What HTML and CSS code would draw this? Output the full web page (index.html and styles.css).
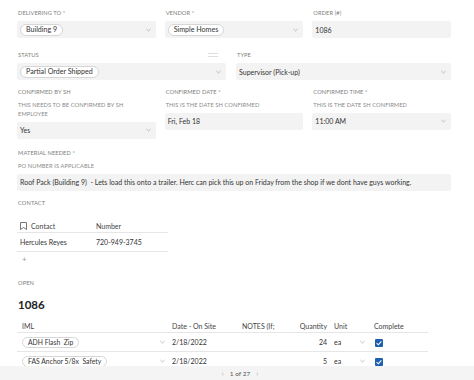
FILE: index.html
```html
<!DOCTYPE html>
<html>
<head>
<meta charset="utf-8">
<link rel="stylesheet" href="styles.css">
</head>
<body>
<div class="page">
  <div class="row row-3">
    <div class="field">
      <div class="label">Delivering to *</div>
      <div class="box"><span class="pill">Building 9</span><svg class="chev" viewBox="0 0 6 4"><polyline points="0.5,0.8 3,3.2 5.5,0.8"/></svg></div>
    </div>
    <div class="field">
      <div class="label">Vendor *</div>
      <div class="box"><span class="pill">Simple Homes</span><svg class="chev" viewBox="0 0 6 4"><polyline points="0.5,0.8 3,3.2 5.5,0.8"/></svg></div>
    </div>
    <div class="field">
      <div class="label">Order (#)</div>
      <div class="box"><span class="val">1086</span></div>
    </div>
  </div>

  <div class="row row-2 gap-r2">
    <div class="field">
      <div class="label label-flex"><span>Status</span><svg class="handle" viewBox="0 0 10 4"><line x1="0" y1="0.5" x2="10" y2="0.5"/><line x1="0" y1="3.5" x2="10" y2="3.5"/></svg></div>
      <div class="box"><span class="pill">Partial Order Shipped</span><svg class="chev" viewBox="0 0 6 4"><polyline points="0.5,0.8 3,3.2 5.5,0.8"/></svg></div>
    </div>
    <div class="field">
      <div class="label">Type</div>
      <div class="box"><span class="val">Supervisor (Pick-up)</span><svg class="chev" viewBox="0 0 6 4"><polyline points="0.5,0.8 3,3.2 5.5,0.8"/></svg></div>
    </div>
  </div>

  <div class="row row-3 gap-r3">
    <div class="field">
      <div class="label">Confirmed by SH</div>
      <div class="desc">This needs to be confirmed by SH employee</div>
      <div class="box"><span class="val">Yes</span><svg class="chev" viewBox="0 0 6 4"><polyline points="0.5,0.8 3,3.2 5.5,0.8"/></svg></div>
    </div>
    <div class="field">
      <div class="label">Confirmed date *</div>
      <div class="desc">This is the date SH confirmed</div>
      <div class="box"><span class="val">Fri, Feb 18</span></div>
    </div>
    <div class="field">
      <div class="label">Confirmed time *</div>
      <div class="desc">This is the date SH confirmed</div>
      <div class="box"><span class="val">11:00 AM</span><svg class="chev" viewBox="0 0 6 4"><polyline points="0.5,0.8 3,3.2 5.5,0.8"/></svg></div>
    </div>
  </div>

  <div class="field gap-r4">
    <div class="label">Material needed *</div>
    <div class="desc">PO number is applicable</div>
    <div class="box"><span class="val">Roof Pack (Building 9)&nbsp; - Lets load this onto a trailer. Herc can pick this up on Friday from the shop if we dont have guys working.</span></div>
  </div>

  <div class="label gap-contact">Contact</div>
  <div class="ctable">
    <div class="crow chead">
      <div class="ccell"><svg class="bookmark" viewBox="0 0 7 8"><path d="M0.5,0.5 H6.5 V7.5 L3.5,5.5 L0.5,7.5 Z"/></svg>Contact</div>
      <div class="ccell">Number</div>
    </div>
    <div class="crow cbody">
      <div class="ccell">Hercules Reyes</div>
      <div class="ccell">720-949-3745</div>
    </div>
  </div>
  <div class="plus">+</div>

  <div class="label gap-open">Open</div>
  <div class="heading">1086</div>

  <div class="itable">
    <div class="irow ihead">
      <div class="icell c-iml">IML</div>
      <div class="icell c-date">Date - On Site</div>
      <div class="icell c-notes">NOTES (If;</div>
      <div class="icell c-qty">Quantity</div>
      <div class="icell c-unit">Unit</div>
      <div class="icell c-comp">Complete</div>
    </div>
    <div class="irow ibody">
      <div class="icell c-iml"><span class="pill pill-sm">ADH Flash&nbsp; Zip</span><svg class="chev" viewBox="0 0 6 4"><polyline points="0.5,0.8 3,3.2 5.5,0.8"/></svg></div>
      <div class="icell c-date">2/18/2022</div>
      <div class="icell c-notes"></div>
      <div class="icell c-qty">24</div>
      <div class="icell c-unit"><span>ea</span><svg class="chev" viewBox="0 0 6 4"><polyline points="0.5,0.8 3,3.2 5.5,0.8"/></svg></div>
      <div class="icell c-comp"><span class="check"><svg viewBox="0 0 8 8"><polyline points="1.6,4.2 3.3,5.8 6.4,2.3"/></svg></span></div>
    </div>
    <div class="irow ibody">
      <div class="icell c-iml"><span class="pill pill-sm">FAS Anchor 5/8x&nbsp; Safety</span><svg class="chev" viewBox="0 0 6 4"><polyline points="0.5,0.8 3,3.2 5.5,0.8"/></svg></div>
      <div class="icell c-date">2/18/2022</div>
      <div class="icell c-notes"></div>
      <div class="icell c-qty">5</div>
      <div class="icell c-unit"><span>ea</span><svg class="chev" viewBox="0 0 6 4"><polyline points="0.5,0.8 3,3.2 5.5,0.8"/></svg></div>
      <div class="icell c-comp"><span class="check"><svg viewBox="0 0 8 8"><polyline points="1.6,4.2 3.3,5.8 6.4,2.3"/></svg></span></div>
    </div>
  </div>
</div>

<div class="pager"><span class="pg-arrow">‹</span><span>1 of 27</span><span class="pg-arrow">›</span></div>
</body>
</html>
```

FILE: styles.css
```css
html, body {
  margin: 0;
  padding: 0;
  overflow: hidden;
  background: #ffffff;
}

body {
  font-family: "Lato", "Open Sans", sans-serif;
  color: #333333;
  width: 474px;
  height: 380px;
}

.page {
  padding: 9px 23px 0 17px;
  width: 434px;
}

.row {
  display: grid;
  column-gap: 9px;
}

.row-3 {
  grid-template-columns: repeat(3, 1fr);
}

.row-2 {
  grid-template-columns: 209px 215px;
  column-gap: 10px;
}

.gap-r2 { margin-top: 13px; }
.gap-r3 { margin-top: 8px; }
.gap-r4 { margin-top: 10.5px; }
.gap-contact { margin-top: 8.5px; }
.gap-open { margin-top: 13px; }

.field {
  display: flex;
  flex-direction: column;
}

.label {
  font-size: 5.7px;
  line-height: 8px;
  text-transform: uppercase;
  color: #7d7d7d;
  padding-left: 1px;
  letter-spacing: 0.1px;
}

.label-flex {
  display: flex;
  justify-content: space-between;
  align-items: center;
}

.handle {
  width: 10px;
  height: 4px;
  margin-right: 8px;
  stroke: #dedede;
  stroke-width: 1;
}

.desc {
  font-size: 5.7px;
  line-height: 9px;
  text-transform: uppercase;
  color: #8a8a8a;
  margin-top: 3.5px;
  padding-left: 1px;
  padding-right: 20px;
  letter-spacing: 0.1px;
}

.box {
  margin-top: 4px;
  height: 17px;
  background: #f3f3f3;
  border-radius: 2px;
  display: flex;
  align-items: center;
  justify-content: space-between;
  padding: 0 5px 0 3px;
  box-sizing: border-box;
}

.val {
  font-size: 7px;
  color: #333333;
  white-space: nowrap;
}

.pill {
  font-size: 7.1px;
  line-height: 10px;
  background: #ffffff;
  border: 1px solid #d6d6d6;
  border-radius: 6px;
  padding: 0 5px;
  color: #333333;
  white-space: nowrap;
}

.chev {
  width: 5px;
  height: 4px;
  fill: none;
  stroke: #a0a0a0;
  stroke-width: 0.8;
  flex-shrink: 0;
}

.ctable {
  margin-top: 12px;
  width: 151px;
}

.crow {
  display: grid;
  grid-template-columns: 76px 75px;
  border-bottom: 1px solid #e6e6e6;
  align-items: center;
}

.chead {
  height: 14px;
  box-sizing: border-box;
}

.cbody {
  height: 19px;
  box-sizing: border-box;
}

.ccell {
  font-size: 7px;
  padding-left: 3px;
  display: flex;
  align-items: center;
  white-space: nowrap;
}

.chead .ccell {
  color: #444444;
}

.bookmark {
  width: 7px;
  height: 8px;
  fill: none;
  stroke: #555555;
  stroke-width: 0.8;
  margin-right: 4px;
}

.plus {
  font-size: 8px;
  line-height: 14px;
  color: #9a9a9a;
  padding-left: 5px;
}

.heading {
  margin-top: 11px;
  font-size: 11.5px;
  line-height: 14px;
  font-weight: 700;
  color: #222222;
  padding-left: 1px;
}

.itable {
  margin-top: 7px;
  width: 411px;
}

.irow {
  display: grid;
  grid-template-columns: 151px 70px 52px 40px 40px 58px;
  border-bottom: 1px solid #e6e6e6;
  align-items: center;
  box-sizing: border-box;
}

.ihead {
  height: 14px;
}

.ibody {
  height: 19px;
}

.icell {
  font-size: 7px;
  padding-left: 4px;
  white-space: nowrap;
  overflow: hidden;
  color: #333333;
}

.ihead .icell {
  color: #444444;
}

.c-iml {
  padding-left: 5px;
  padding-right: 3px;
  display: flex;
  justify-content: space-between;
  align-items: center;
}

.ihead .c-iml {
  display: block;
}

.c-qty {
  text-align: right;
  padding-left: 0;
  padding-right: 3px;
}

.c-unit {
  display: flex;
  justify-content: space-between;
  align-items: center;
  padding-right: 5px;
}

.ihead .c-unit {
  display: block;
}

.pill-sm {
  font-size: 6.8px;
  line-height: 9px;
}

.check {
  display: inline-flex;
  width: 8px;
  height: 8px;
  margin-left: 1px;
  background: #1d5fb0;
  border-radius: 1px;
  vertical-align: middle;
}

.check svg {
  width: 8px;
  height: 8px;
  fill: none;
  stroke: #ffffff;
  stroke-width: 1.1;
}

.pager {
  position: fixed;
  left: 0;
  right: 0;
  bottom: 0;
  height: 14px;
  background: #f4f4f4;
  display: flex;
  justify-content: center;
  align-items: center;
  gap: 6px;
  font-family: "Lato", "Open Sans", sans-serif;
  font-size: 6.5px;
  color: #555555;
  padding-left: 6px;
}

.pg-arrow {
  color: #aaaaaa;
  font-size: 7px;
}
```
